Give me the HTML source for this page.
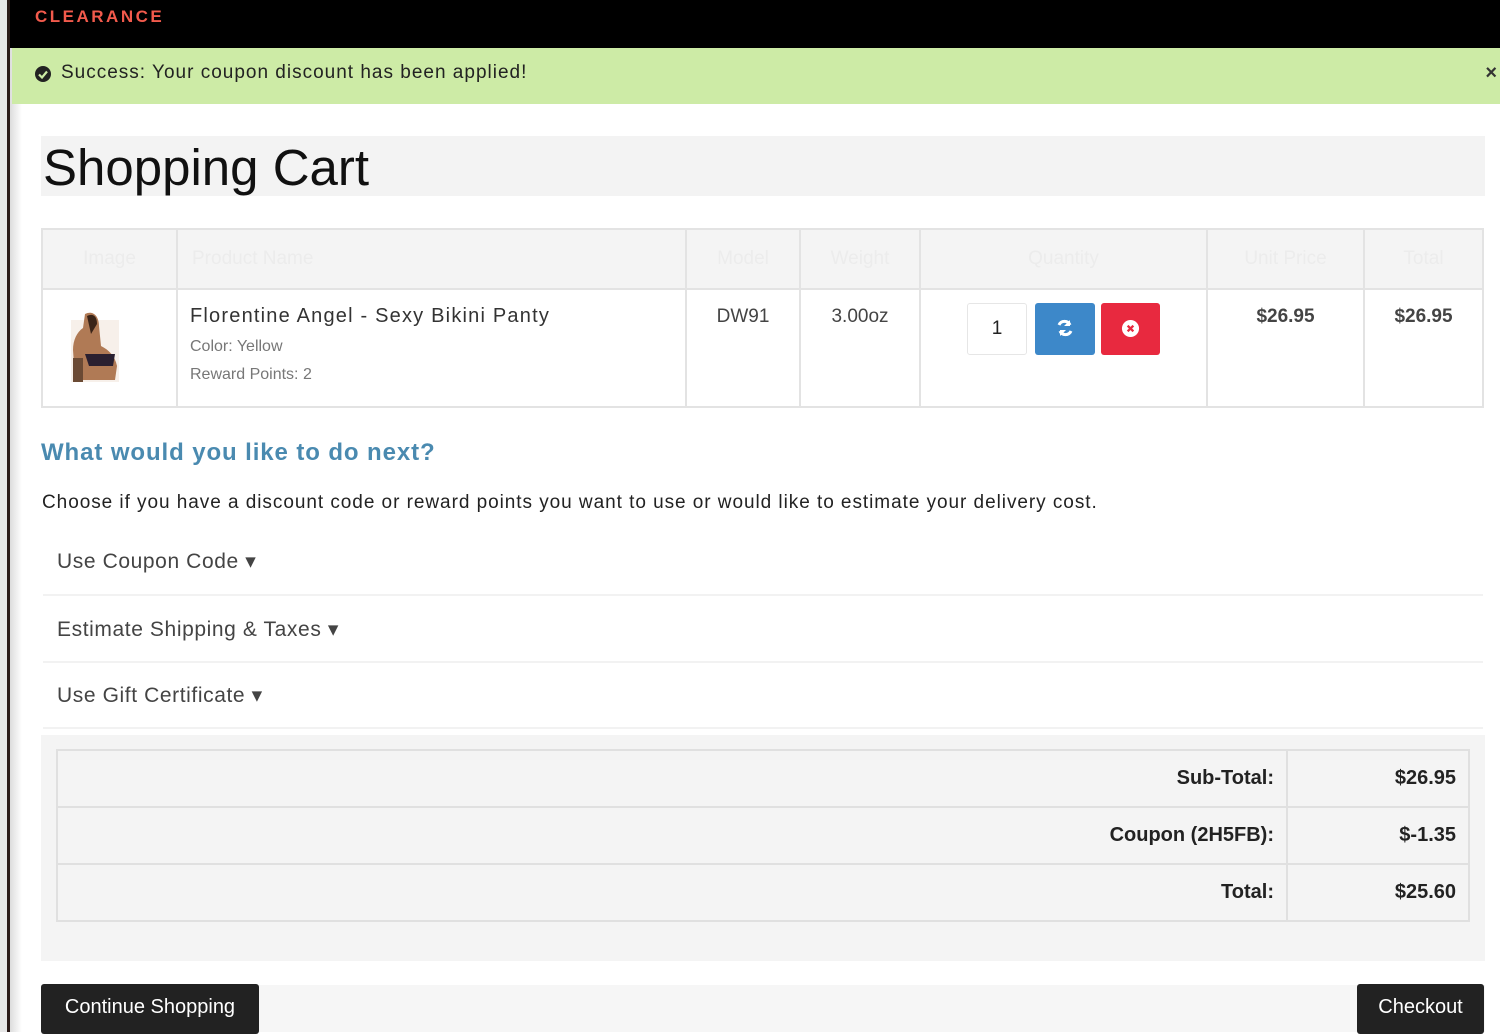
<!DOCTYPE html>
<html><head><meta charset="utf-8"><style>
*{margin:0;padding:0;box-sizing:border-box}
body{width:1500px;height:1032px;overflow:hidden;background:#fff;font-family:"Liberation Sans",sans-serif;position:relative;color:#222}
.a{position:absolute}
.lstrip{left:0;top:0;width:7px;height:1032px;background:#e6e6e6}
.lline{left:7px;top:0;width:3px;height:1032px;background:#2a1a18}
.lsh{left:10px;top:48px;width:12px;height:984px;background:linear-gradient(90deg,#ddd,#fff)}
.top{left:10px;top:0;width:1490px;height:48px;background:#000}
.clr{left:35px;top:7px;color:#f25a4c;font-weight:bold;font-size:17px;letter-spacing:2.5px}
.succ{left:12px;top:48px;width:1488px;height:56px;background:#cdeba6}
.succ span{position:absolute;left:49px;top:14px;font-size:19px;color:#222;letter-spacing:1px}
.x{right:3px;top:62px;font-size:20px;font-weight:bold;color:#333}
.h1{left:41px;top:136px;width:1444px;height:60px;background:#f3f3f3}
.h1 span{position:absolute;left:2px;top:2px;font-size:51px;color:#111}
table{border-collapse:collapse}
.ct{left:41px;top:228px;width:1443px}
.ct td{border:2px solid #e3e3e3;vertical-align:top;font-size:19px}
.ct tr.hd td{height:60px;background:#f4f4f4;color:#ececec;text-align:center;vertical-align:middle}
.ct tr.rw td{height:118px}
.tt{left:56px;top:749px;width:1414px}
.tt td{border:2px solid #e0e0e0;height:57px;text-align:right;padding-right:12px;font-size:20px;color:#222;font-weight:bold}
</style></head><body>
<div class="a lstrip"></div><div class="a lline"></div><div class="a lsh"></div>
<div class="a top"></div><div class="a clr">CLEARANCE</div>
<div class="a succ"><svg class="a" style="left:23px;top:18px" width="16" height="16" viewBox="0 0 16 16"><circle cx="8" cy="8" r="8" fill="#222"/><path d="M4 8.5l3 3 5-6" stroke="#cdeba6" stroke-width="2.2" fill="none"/></svg><span>Success: Your coupon discount has been applied!</span></div>
<div class="a x">×</div>
<div class="a h1"><span>Shopping Cart</span></div>
<table class="a ct"><tr class="hd"><td style="width:135px">Image</td><td style="width:509px;text-align:left;padding-left:14px">Product Name</td><td style="width:114px">Model</td><td style="width:120px">Weight</td><td style="width:287px">Quantity</td><td style="width:157px">Unit Price</td><td>Total</td></tr>
<tr class="rw"><td><svg style="margin:20px 0 0 28px" width="48" height="72" viewBox="0 0 48 72"><rect x="0" y="10" width="48" height="62" fill="#f7f0ea"/><path d="M14 4c8-4 14 2 14 12l2 20c8 4 14 10 16 20l-2 14H4L2 40c0-10 4-18 10-22z" fill="#b07a55"/><path d="M16 6c6-3 10 0 10 8l-6 10z" fill="#3a2418"/><path d="M14 44h30l-2 12H18z" fill="#2a2030"/><rect x="2" y="48" width="10" height="24" fill="#6b4a34"/></svg></td>
<td style="padding:15px 0 0 12px"><div style="font-size:20px;letter-spacing:1.2px;color:#333">Florentine Angel - Sexy Bikini Panty</div><div style="font-size:16px;color:#777;margin-top:10px">Color: Yellow</div><div style="font-size:16px;color:#777;margin-top:10px">Reward Points: 2</div></td>
<td style="text-align:center;padding-top:16px;color:#444">DW91</td><td style="text-align:center;padding-top:16px;color:#444">3.00oz</td>
<td style="padding-top:13px"><div style="position:relative;height:52px"><div class="a" style="left:46px;top:0;width:60px;height:52px;border:1px solid #e6e6e6;border-radius:3px;text-align:center;line-height:50px;font-size:19px">1</div><div class="a" style="left:114px;top:0;width:60px;height:52px;background:#3d88c9;border-radius:3px"><svg style="margin:15px 0 0 20px" width="20" height="20" viewBox="0 0 20 20"><path d="M15 7a6 6 0 0 0-11 0M5 13a6 6 0 0 0 11 0" stroke="#fff" stroke-width="3" fill="none"/><path d="M15 2v6h-6zM5 18v-6h6z" fill="#fff"/></svg></div><div class="a" style="left:180px;top:0;width:59px;height:52px;background:#e8293f;border-radius:3px"><svg style="margin:16px 0 0 20px" width="19" height="19" viewBox="0 0 20 20"><circle cx="10" cy="10" r="9" fill="#fff"/><path d="M7 7l6 6M13 7l-6 6" stroke="#e8293f" stroke-width="2.4"/></svg></div></div></td>
<td style="text-align:center;padding-top:16px;font-weight:bold;color:#444">$26.95</td><td style="text-align:center;padding-top:16px;font-weight:bold;color:#444">$26.95</td></tr></table>
<div class="a" style="left:41px;top:439px;font-size:24px;font-weight:bold;color:#4a8ab0;letter-spacing:.9px">What would you like to do next?</div>
<div class="a" style="left:42px;top:492px;font-size:19px;color:#222;letter-spacing:.95px">Choose if you have a discount code or reward points you want to use or would like to estimate your delivery cost.</div>
<div class="a" style="left:43px;top:594px;width:1440px;height:2px;background:#f2f2f2"></div>
<div class="a" style="left:43px;top:661px;width:1440px;height:2px;background:#f2f2f2"></div>
<div class="a" style="left:43px;top:727px;width:1440px;height:2px;background:#f2f2f2"></div>
<div class="a" style="left:57px;top:549px;font-size:21px;color:#444;letter-spacing:.6px">Use Coupon Code ▾</div>
<div class="a" style="left:57px;top:617px;font-size:21px;color:#444;letter-spacing:.6px">Estimate Shipping &amp; Taxes ▾</div>
<div class="a" style="left:57px;top:683px;font-size:21px;color:#444;letter-spacing:.6px">Use Gift Certificate ▾</div>
<div class="a" style="left:41px;top:735px;width:1444px;height:226px;background:#f4f4f4"></div>
<table class="a tt"><tr><td style="width:1230px">Sub-Total:</td><td>$26.95</td></tr><tr><td>Coupon (2H5FB):</td><td>$-1.35</td></tr><tr><td>Total:</td><td>$25.60</td></tr></table>
<div class="a" style="left:41px;top:985px;width:1444px;height:47px;background:#f6f6f6"></div>
<div class="a" style="left:41px;top:984px;width:218px;height:50px;background:#222;border-radius:3px;color:#fff;font-size:20px;line-height:46px;text-align:center">Continue Shopping</div>
<div class="a" style="left:1357px;top:984px;width:127px;height:50px;background:#222;border-radius:3px;color:#fff;font-size:20px;line-height:46px;text-align:center">Checkout</div>
</body></html>
